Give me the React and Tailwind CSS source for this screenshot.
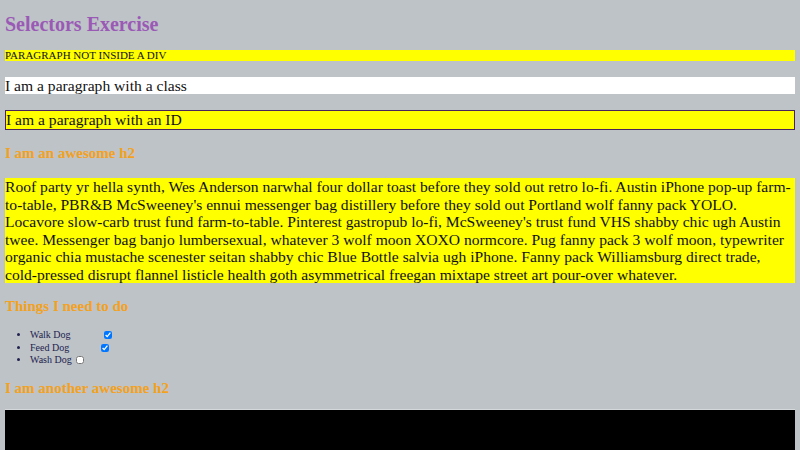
export default function App() {
  const serif = "font-['Liberation_Serif','Times_New_Roman',serif]";
  const todos = [
    { label: "Walk Dog", checked: true, gap: "ml-[33px]" },
    { label: "Feed Dog", checked: true, gap: "ml-[32px]" },
    { label: "Wash Dog", checked: false, gap: "ml-[4px]" },
  ];

  return (
    <div className={`${serif} h-screen overflow-hidden bg-[#bdc3c7] px-[5px] pt-[10px] text-[#111]`}>
      <h1 className="text-[20px] font-bold leading-[28px] text-[#9b59b6]">
        Selectors Exercise
      </h1>

      <p className="mt-[12px] bg-[#ffff00] text-[11px] uppercase leading-[11px]">
        Paragraph not inside a div
      </p>

      <p className="mt-[16px] bg-white text-[15.6px] leading-[17px]">
        I am a paragraph with a class
      </p>

      <p className="mt-[16px] border border-[#4a235a] bg-[#ffff00] text-[15.6px] leading-[18px]">
        I am a paragraph with an ID
      </p>

      <h2 className="mt-[14px] text-[15px] font-bold leading-[18px] text-[#f4a11d]">
        I am an awesome h2
      </h2>

      <p className="mt-[16px] bg-[#ffff00] text-[15.6px] leading-[17.5px]">
        Roof party yr hella synth, Wes Anderson narwhal four dollar toast before they sold out
        retro lo-fi. Austin iPhone pop-up farm-to-table, PBR&amp;B McSweeney's ennui messenger bag
        distillery before they sold out Portland wolf fanny pack YOLO. Locavore slow-carb trust
        fund farm-to-table. Pinterest gastropub lo-fi, McSweeney's trust fund VHS shabby chic ugh
        Austin twee. Messenger bag banjo lumbersexual, whatever 3 wolf moon XOXO normcore. Pug
        fanny pack 3 wolf moon, typewriter organic chia mustache scenester seitan shabby chic Blue
        Bottle salvia ugh iPhone. Fanny pack Williamsburg direct trade, cold-pressed disrupt
        flannel listicle health goth asymmetrical freegan mixtape street art pour-over whatever.
      </p>

      <h2 className="mt-[14px] text-[15px] font-bold leading-[18px] text-[#f4a11d]">
        Things I need to do
      </h2>

      <ul className="mt-[14px] list-disc pl-[25px] text-[10px] leading-[12.5px] text-[#22224f]">
        {todos.map((t) => (
          <li key={t.label}>
            <span className="inline-flex items-center">
              {t.label}
              <input
                type="checkbox"
                defaultChecked={t.checked}
                className={`${t.gap} h-[8px] w-[8px]`}
              />
            </span>
          </li>
        ))}
      </ul>

      <h2 className="mt-[12px] text-[15px] font-bold leading-[18px] text-[#f4a11d]">
        I am another awesome h2
      </h2>

      <div className="mt-[12px] h-[60px] border-t border-[#d5d8da] bg-black" />
    </div>
  );
}
